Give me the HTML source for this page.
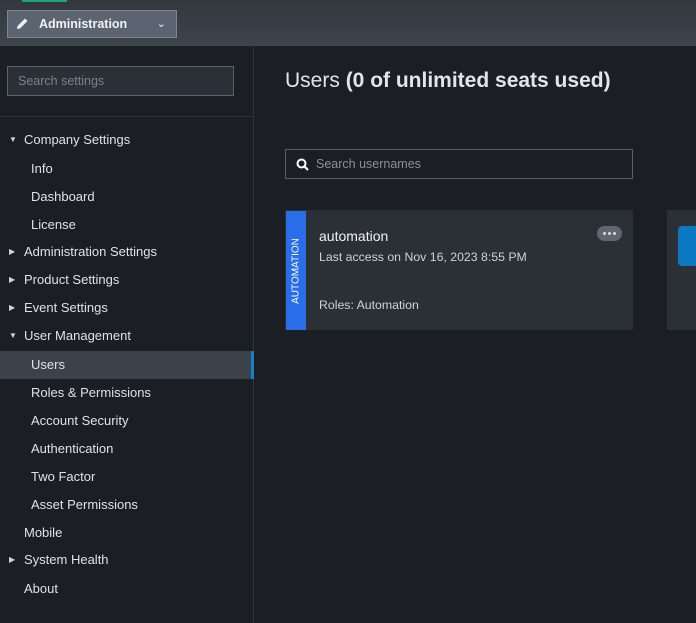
<!DOCTYPE html><html><head><style>
*{margin:0;padding:0;box-sizing:border-box}
body{width:696px;height:623px;overflow:hidden;background:#1b1e22;font-family:"Liberation Sans",sans-serif;color:#e3e5e8;position:relative}
.top{position:absolute;left:0;top:0;width:696px;height:46px;background:linear-gradient(#33383e,#3e444c)}
.green{position:absolute;left:22px;top:0;width:45px;height:2px;background:#1fa37a}
.dd{position:absolute;left:7px;top:10px;width:170px;height:28px;background:#5b6470;border:1px solid #7b8490;font-size:12.5px;font-weight:bold;color:#f0f2f4;line-height:26px;padding-left:31px}
.dd .chev{position:absolute;right:10px;top:0;font-weight:normal;font-size:11px}
.side{position:absolute;left:0;top:46px;width:254px;height:577px;border-right:1px solid #30343a}
.ss{position:absolute;left:7px;top:66px;width:227px;height:30px;background:#2b2f36;border:1px solid #5a616a;font-size:12.5px;color:#7b828b;line-height:28px;padding-left:10px}
.hr{position:absolute;left:0;top:116px;width:254px;height:1px;background:#30343a}
.it{position:absolute;left:0;width:254px;height:28px;line-height:28px;font-size:13px;color:#dfe2e6}
.h{padding-left:24px}.s{padding-left:31px}
.tri{position:absolute;left:9px;top:0;font-size:8px;color:#d0d4d8}
.sel{background:#3c424a;border-right:3px solid #1481c9;width:254px}
.title{position:absolute;left:285px;top:69px;font-size:21px;color:#e3e5e8}
.su{position:absolute;left:285px;top:149px;width:348px;height:30px;border:1px solid #5a616a;font-size:12.5px;color:#8a919a;line-height:28px;padding-left:30px}
.card{position:absolute;left:285px;top:210px;width:348px;height:120px;background:#2b2f36}
.band{position:absolute;left:1px;top:1px;width:20px;height:119px;background:#2a6de8}
.band span{position:absolute;left:50%;top:50%;transform:translate(-50%,-50%) rotate(-90deg);font-size:10px;color:#fff;white-space:nowrap}
.card2{position:absolute;left:667px;top:210px;width:40px;height:120px;background:#2b2f36}
.btn{position:absolute;left:678px;top:226px;width:30px;height:40px;background:#0a78c2;border-radius:4px}
.more{position:absolute;left:597px;top:226px;width:25px;height:15px;background:#5f6772;border-radius:8px}
.more i{position:absolute;top:6px;width:3px;height:3px;border-radius:50%;background:#d8dce0}
</style></head><body>
<div class="top"></div><div class="green"></div>
<div class="dd"><svg style="position:absolute;left:8px;top:6px" width="13" height="13" viewBox="0 0 13 13"><path d="M1 12 L1.5 9 L9 1.5 L11.5 4 L4 11.5 Z" fill="#eee"/></svg>Administration<span class="chev">&#8964;</span></div>
<div class="side"></div>
<div class="ss">Search settings</div>
<div class="hr"></div>
<div class="it h" style="top:126px"><span class="tri">&#9660;</span>Company Settings</div>
<div class="it s" style="top:155px">Info</div>
<div class="it s" style="top:183px">Dashboard</div>
<div class="it s" style="top:211px">License</div>
<div class="it h" style="top:238px"><span class="tri">&#9654;</span>Administration Settings</div>
<div class="it h" style="top:266px"><span class="tri">&#9654;</span>Product Settings</div>
<div class="it h" style="top:294px"><span class="tri">&#9654;</span>Event Settings</div>
<div class="it h" style="top:322px"><span class="tri">&#9660;</span>User Management</div>
<div class="it s sel" style="top:351px">Users</div>
<div class="it s" style="top:379px">Roles &amp; Permissions</div>
<div class="it s" style="top:407px">Account Security</div>
<div class="it s" style="top:435px">Authentication</div>
<div class="it s" style="top:463px">Two Factor</div>
<div class="it s" style="top:491px">Asset Permissions</div>
<div class="it h" style="top:519px">Mobile</div>
<div class="it h" style="top:546px"><span class="tri">&#9654;</span>System Health</div>
<div class="it h" style="top:575px">About</div>
<div class="title">Users <b>(0 of unlimited seats used)</b></div>
<div class="su"><svg style="position:absolute;left:10px;top:8px" width="13" height="13" viewBox="0 0 13 13"><circle cx="5.5" cy="5.5" r="4" stroke="#fff" stroke-width="2" fill="none"/><path d="M8.5 8.5 L12 12" stroke="#fff" stroke-width="2.2"/></svg>Search usernames</div>
<div class="card"><div class="band"><span>AUTOMATION</span></div>
<div style="position:absolute;left:34px;top:18px;font-size:14px;color:#f0f2f4">automation</div>
<div style="position:absolute;left:34px;top:40px;font-size:12.3px;color:#cfd3d8">Last access on Nov 16, 2023 8:55 PM</div>
<div style="position:absolute;left:34px;top:88px;font-size:12.3px;color:#cfd3d8">Roles: Automation</div></div>
<div class="more"><i style="left:6px"></i><i style="left:11px"></i><i style="left:16px"></i></div>
<div class="card2"></div><div class="btn"></div>
</body></html>
